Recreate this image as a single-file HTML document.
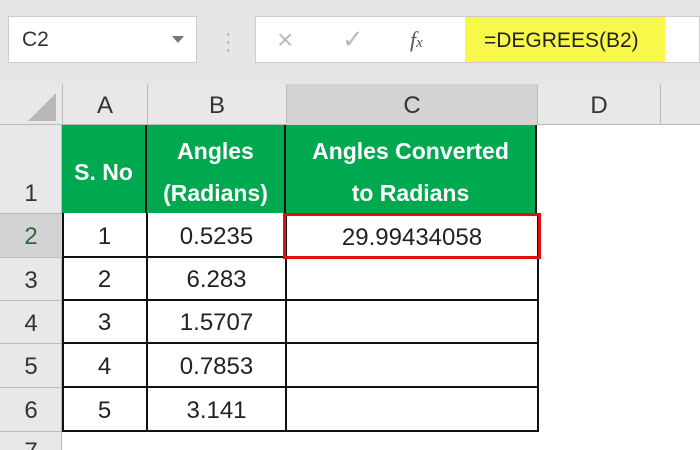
<!DOCTYPE html><html style="overflow:hidden;width:700px;height:450px"><head><style>
*{margin:0;padding:0;box-sizing:border-box}
body{width:700px;height:450px;overflow:hidden;background:#fff;position:relative;font-family:"Liberation Sans",sans-serif}
.a{position:absolute}
.t{display:flex;align-items:center;justify-content:center;color:#222;font-size:24px;padding-top:3px}
.h{background:#e8e8e8;color:#333;font-size:24px}
.g{background:#00a84f;color:#fff;font-weight:bold;font-size:23px;text-align:center;line-height:42px;flex-direction:column;padding-top:6px}
</style></head><body>
<div class="a" style="left:0;top:0;width:700px;height:84px;background:#e6e6e6"></div>
<div class="a" style="left:8px;top:16px;width:189px;height:47px;background:#fff;border:1px solid #ccc"></div>
<div class="a" style="left:22px;top:28px;font-size:21px;color:#333">C2</div>
<div class="a" style="left:172px;top:36px;width:0;height:0;border-left:6px solid transparent;border-right:6px solid transparent;border-top:7px solid #777"></div>
<div class="a" style="left:225px;top:30px;color:#aaa;font-size:20px;line-height:8px">·<br>·<br>·</div>
<div class="a" style="left:255px;top:16px;width:445px;height:47px;background:#fff;border:1px solid #ccc"></div>
<div class="a" style="left:465px;top:17px;width:200px;height:45px;background:#f8f84a"></div>
<div class="a" style="left:277px;top:24px;font-size:28px;color:#bbb">×</div>
<div class="a" style="left:342px;top:24px;font-size:26px;color:#bbb">✓</div>
<div class="a" style="left:410px;top:27px;font-size:22px;color:#555;font-style:italic;font-family:'Liberation Serif',serif">f<span style="font-size:15px">x</span></div>
<div class="a" style="left:484px;top:29px;font-size:21px;color:#222">=DEGREES(B2)</div>
<div class="a h" style="left:0;top:84px;width:700px;height:41px;border-bottom:1px solid #bbb"></div>
<div class="a" style="left:286px;top:84px;width:251px;height:41px;background:#d3d3d3"></div>
<div class="a" style="left:28px;top:93px;width:0;height:0;border-left:28px solid transparent;border-bottom:28px solid #b8b8b8"></div>
<div class="a t h" style="left:62px;top:84px;width:85px;height:41px;border-left:1px solid #bbb;background:none">A</div>
<div class="a t h" style="left:147px;top:84px;width:139px;height:41px;border-left:1px solid #bbb;background:none">B</div>
<div class="a t h" style="left:286px;top:84px;width:251px;height:41px;border-left:1px solid #bbb;background:none">C</div>
<div class="a t h" style="left:537px;top:84px;width:123px;height:41px;border-left:1px solid #bbb;background:none">D</div>
<div class="a" style="left:660px;top:84px;width:1px;height:41px;background:#bbb"></div>
<div class="a h" style="left:0;top:125px;width:62px;height:325px;border-right:1px solid #bbb"></div>
<div class="a" style="left:0;top:213px;width:62px;height:44px;background:#d3d3d3"></div>
<div class="a t" style="left:0;top:172px;width:62px;height:41px;color:#333">1</div>
<div class="a t" style="left:0;top:213px;width:62px;height:44px;color:#2a6a3a;border-top:1px solid #bbb">2</div>
<div class="a t" style="left:0;top:257px;width:62px;height:43px;color:#333;border-top:1px solid #bbb">3</div>
<div class="a t" style="left:0;top:300px;width:62px;height:43px;color:#333;border-top:1px solid #bbb">4</div>
<div class="a t" style="left:0;top:343px;width:62px;height:44px;color:#333;border-top:1px solid #bbb">5</div>
<div class="a t" style="left:0;top:387px;width:62px;height:44px;color:#333;border-top:1px solid #bbb">6</div>
<div class="a" style="left:0;top:431px;width:62px;height:19px;overflow:hidden;border-top:1px solid #bbb;font-size:24px;color:#333;text-align:center;line-height:40px">7</div>
<div class="a t g" style="left:62px;top:125px;width:85px;height:88px;border-right:2px solid #111">S. No</div>
<div class="a t g" style="left:147px;top:125px;width:139px;height:88px;border-right:2px solid #111"><div>Angles</div><div>(Radians)</div></div>
<div class="a t g" style="left:286px;top:125px;width:251px;height:88px;border-right:2px solid #111"><div>Angles Converted</div><div>to Radians</div></div>
<div class="a" style="left:62px;top:213px;width:477px;height:219px;border:2px solid #111;border-top:none"></div>
<div class="a" style="left:146px;top:213px;width:2px;height:219px;background:#111"></div>
<div class="a" style="left:285px;top:213px;width:2px;height:219px;background:#111"></div>
<div class="a" style="left:62px;top:256px;width:477px;height:2px;background:#111"></div>
<div class="a" style="left:62px;top:299px;width:477px;height:2px;background:#111"></div>
<div class="a" style="left:62px;top:342px;width:477px;height:2px;background:#111"></div>
<div class="a" style="left:62px;top:386px;width:477px;height:2px;background:#111"></div>
<div class="a t" style="left:62px;top:213px;width:85px;height:44px">1</div>
<div class="a t" style="left:62px;top:257px;width:85px;height:43px">2</div>
<div class="a t" style="left:62px;top:300px;width:85px;height:43px">3</div>
<div class="a t" style="left:62px;top:343px;width:85px;height:44px">4</div>
<div class="a t" style="left:62px;top:387px;width:85px;height:44px">5</div>
<div class="a t" style="left:147px;top:213px;width:139px;height:44px">0.5235</div>
<div class="a t" style="left:147px;top:257px;width:139px;height:43px">6.283</div>
<div class="a t" style="left:147px;top:300px;width:139px;height:43px">1.5707</div>
<div class="a t" style="left:147px;top:343px;width:139px;height:44px">0.7853</div>
<div class="a t" style="left:147px;top:387px;width:139px;height:44px">3.141</div>
<div class="a t" style="left:283px;top:213px;width:258px;height:46px;border:3px solid #e31010">29.99434058</div>
</body></html>
